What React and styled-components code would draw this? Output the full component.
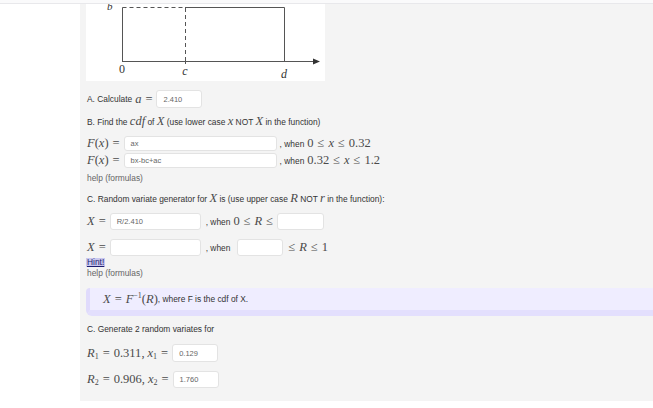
import React from "react";
import styled, { createGlobalStyle } from "styled-components";

const Global = createGlobalStyle`
  html, body {
    margin: 0;
    padding: 0;
    background: #fff;
    font-family: "Liberation Sans", Arial, sans-serif;
  }
`;

const Page = styled.div`
  position: relative;
  width: 653px;
  height: 408px;
  overflow: hidden;
  padding-left: 80px;
  box-sizing: border-box;
`;

const TopStrip = styled.div`
  position: absolute;
  top: 0;
  left: 0;
  right: 0;
  height: 3px;
  background: #fafafb;
  border-bottom: 1px solid #e8e8eb;
`;

const Panel = styled.div`
  background: #f4f4f4;
  padding: 0 0 13px 7px;
  color: #333;
  font-size: 8.4px;
  display: flex;
  flex-direction: column;
  align-items: flex-start;
`;

const GraphBox = styled.div`
  width: 239px;
  height: 81px;
  margin-left: -1px;
  background: #fff;
  overflow: hidden;
`;

const Row = styled.div`
  display: flex;
  align-items: center;
  height: ${(p) => p.$h || 17}px;
  margin-top: ${(p) => p.$mt || 0}px;
  white-space: nowrap;
`;

const Line = styled.div`
  height: 10px;
  line-height: 10px;
  margin-top: ${(p) => p.$mt || 0}px;
  white-space: nowrap;
  color: ${(p) => (p.$muted ? "#666" : "#333")};
`;

const Math = styled.span`
  font-family: "Liberation Serif", "Times New Roman", serif;
  font-size: 12.5px;
  color: #4a4a4a;
  margin-left: ${(p) => p.$ml || 0}px;
  margin-right: ${(p) => p.$mr || 0}px;

  i {
    font-style: italic;
  }
  sub {
    font-size: 8px;
    vertical-align: -2px;
    line-height: 0;
  }
  sup {
    font-size: 8px;
    vertical-align: 5px;
    line-height: 0;
  }
`;

const Op = styled.span`
  margin: 0 4px;
`;

const Comma = styled.span`
  margin-right: 3px;
`;

const Input = styled.div`
  width: ${(p) => p.$w}px;
  height: ${(p) => p.$h || 17}px;
  margin-left: ${(p) => p.$ml || 0}px;
  box-sizing: border-box;
  background: #fff;
  border: 1px solid #e3e3e3;
  border-radius: 3px;
  padding-left: 6px;
  display: flex;
  align-items: center;
  font-size: 7.5px;
  color: #666;
`;

const When = styled.span`
  margin-left: ${(p) => p.$ml || 3}px;
  font-size: 8.4px;
  color: #333;
`;

const Hint = styled.a`
  display: block;
  margin-top: 2px;
  height: 9px;
  line-height: 9px;
  padding: 0 1px;
  margin-left: -1px;
  font-size: 8.4px;
  color: #1e1e6e;
  background: #c9c7ee;
  text-decoration: underline;
`;

const Note = styled.div`
  margin-top: 10px;
  margin-left: -1px;
  width: 567px;
  height: 22px;
  box-sizing: content-box;
  background: #efedff;
  border-left: 4px solid #e0dbfc;
  border-bottom: 6px solid #e3dffd;
  border-radius: 4px 0 0 6px;
  padding-left: 13px;
  display: flex;
  align-items: center;
  white-space: nowrap;
`;

function Graph() {
  return (
    <svg width="239" height="81" viewBox="0 0 239 81">
      <g stroke="#555" strokeWidth="1" fill="none">
        <line x1="36.5" y1="7.5" x2="36.5" y2="61.5" />
        <line x1="36.5" y1="7.5" x2="99" y2="7.5" strokeDasharray="4 3" />
        <line x1="99" y1="7.5" x2="198.5" y2="7.5" />
        <line x1="198.5" y1="7.5" x2="198.5" y2="61.5" />
        <line x1="99.5" y1="8" x2="99.5" y2="61" strokeDasharray="4 3" />
        <line x1="36" y1="61.5" x2="230" y2="61.5" />
        <line x1="99.5" y1="59" x2="99.5" y2="64" />
      </g>
      <polygon points="234,61.5 227,58.5 227,64.5" fill="#333" />
      <g fontFamily="'Liberation Serif', serif" fill="#333">
        <text x="21" y="10" fontSize="11" fontStyle="italic">b</text>
        <text x="36" y="73" fontSize="12" textAnchor="middle">0</text>
        <text x="99" y="75" fontSize="12" fontStyle="italic" textAnchor="middle">c</text>
        <text x="198" y="78" fontSize="12" fontStyle="italic" textAnchor="middle">d</text>
      </g>
    </svg>
  );
}

export default function App() {
  return (
    <Page>
      <Global />
      <TopStrip />
      <Panel>
        <GraphBox>
          <Graph />
        </GraphBox>

        <Row $mt={9} $h={18}>
          A. Calculate
          <Math $ml={3}>
            <i>a</i>
            <Op>=</Op>
          </Math>
          <Input $w={46} $h={18}>2.410</Input>
        </Row>

        <Line $mt={8}>
          B. Find the <Math><i>cdf</i></Math> of <Math><i>X</i></Math> (use lower case{" "}
          <Math><i>x</i></Math> NOT <Math><i>X</i></Math> in the function)
        </Line>

        <Row $mt={10} $h={15}>
          <Math>
            <i>F</i>(<i>x</i>)<Op>=</Op>
          </Math>
          <Input $w={153} $h={15}>ax</Input>
          <When>, when</When>
          <Math $ml={3}>
            0<Op>≤</Op>
            <i>x</i>
            <Op>≤</Op>0.32
          </Math>
        </Row>
        <Row $mt={2} $h={15}>
          <Math>
            <i>F</i>(<i>x</i>)<Op>=</Op>
          </Math>
          <Input $w={153} $h={15}>bx-bc+ac</Input>
          <When>, when</When>
          <Math $ml={3}>
            0.32<Op>≤</Op>
            <i>x</i>
            <Op>≤</Op>1.2
          </Math>
        </Row>
        <Line $mt={5} $muted>help (formulas)</Line>

        <Line $mt={10}>
          C. Random variate generator for <Math><i>X</i></Math> is (use upper case{" "}
          <Math><i>R</i></Math> NOT <Math><i>r</i></Math> in the function):
        </Line>

        <Row $mt={10}>
          <Math>
            <i>X</i>
            <Op>=</Op>
          </Math>
          <Input $w={91}>R/2.410</Input>
          <When $ml={5}>, when</When>
          <Math $ml={3}>
            0<Op>≤</Op>
            <i>R</i>
            <Op>≤</Op>
          </Math>
          <Input $w={47} />
        </Row>
        <Row $mt={9}>
          <Math>
            <i>X</i>
            <Op>=</Op>
          </Math>
          <Input $w={91} />
          <When $ml={5}>, when</When>
          <Input $w={46} $ml={7} />
          <Math $ml={1}>
            <Op>≤</Op>
            <i>R</i>
            <Op>≤</Op>1
          </Math>
        </Row>
        <Hint>Hint!</Hint>
        <Line $mt={1} $muted>help (formulas)</Line>

        <Note>
          <Math>
            <i>X</i>
            <Op>=</Op>
            <i>F</i>
            <sup>−1</sup>(<i>R</i>)
          </Math>
          , where F is the cdf of X.
        </Note>

        <Line $mt={8}>C. Generate 2 random variates for</Line>

        <Row $mt={10} $h={18}>
          <Math>
            <i>R</i>
            <sub>1</sub>
            <Op>=</Op>0.311<Comma>,</Comma><i>x</i>
            <sub>1</sub>
            <Op>=</Op>
          </Math>
          <Input $w={46} $h={18}>0.129</Input>
        </Row>
        <Row $mt={9}>
          <Math>
            <i>R</i>
            <sub>2</sub>
            <Op>=</Op>0.906<Comma>,</Comma><i>x</i>
            <sub>2</sub>
            <Op>=</Op>
          </Math>
          <Input $w={46}>1.760</Input>
        </Row>
      </Panel>
    </Page>
  );
}
